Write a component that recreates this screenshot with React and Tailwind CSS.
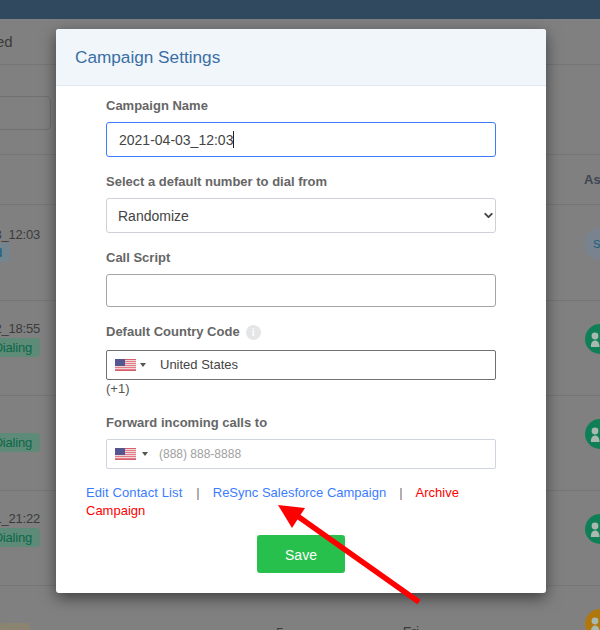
import React from "react";
import { ChevronDown } from "lucide-react";

const Flag = () => (
  <svg width="21" height="12" viewBox="0 0 21 12" className="block shrink-0">
    <rect width="21" height="12" fill="#f2d5d8" />
    <rect y="0" width="21" height="1" fill="#d8606c" />
    <rect y="2" width="21" height="1" fill="#e07d87" />
    <rect y="4" width="21" height="1" fill="#e07d87" />
    <rect y="6" width="21" height="1" fill="#e07d87" />
    <rect y="8" width="21" height="1" fill="#e07d87" />
    <rect y="10" width="21" height="1" fill="#e07d87" />
    <rect y="11" width="21" height="1" fill="#d8606c" />
    <rect width="10" height="7" fill="#55558f" />
  </svg>
);

const Caret = () => (
  <span className="block w-0 h-0 border-x-[3.5px] border-x-transparent border-t-[4px] border-t-[#555]" />
);

const Label = ({ children, className = "" }) => (
  <label className={`flex items-center h-5 text-[13px] font-bold text-[#666] ${className}`}>{children}</label>
);

const UsersGlyph = () => (
  <svg width="30" height="30" viewBox="0 0 30 30" fill="#a9b9af" className="block">
    <circle cx="10" cy="12" r="3.400" />
    <path d="M6 23c-.4-3.800 1.400-6.500 4.200-6.500 2.600 0 4.300 2.400 4.300 6.500z" />
    <circle cx="19" cy="10.500" r="4" />
    <path d="M15.500 23c0-4.500-.6-6 1-7.500 1-.6 4-.6 5 0 2 1.500 2.500 4 2.500 7.500z" />
  </svg>
);

const Avatar = ({ color = "bg-[#0f7f58]" }) => (
  <div className={`w-[30px] h-[30px] rounded-full ${color}`}>
    <UsersGlyph />
  </div>
);

const Row = ({ time, badge, badgeClass, avatar, height = "h-[95px]", top = "pt-[19px]", avatarTop = "pt-[23px]" }) => (
  <div className={`${height} shrink-0 border-b border-[#767676] flex justify-between`}>
    <div className={`w-[40px] overflow-hidden flex flex-col items-end ${top}`}>
      <span className="h-[18px] flex items-center text-[13px] tracking-[-0.2px] text-[#3b3b3b] whitespace-nowrap">{time}</span>
      <span className={`h-[19px] px-[8px] flex items-center text-[13px] tracking-[-0.2px] rounded-sm whitespace-nowrap ${badgeClass}`}>{badge}</span>
    </div>
    <div className={`w-[15px] overflow-hidden ${avatarTop}`}>{avatar}</div>
  </div>
);

export default function App() {
  return (
    <div className="relative w-[600px] h-[630px] overflow-hidden bg-[#808080] opacity-[0.999] font-['Liberation_Sans',Arial,sans-serif]">
      {/* dimmed page behind the dialog */}
      <div className="h-[19px] bg-[#31495f]" />
      <div className="h-[46px] border-b border-[#767676] flex items-center text-[15px] text-[#3b3b3b]">
        <span className="-ml-[4px] pt-[2px]">ed</span>
      </div>
      <div className="h-[90px] border-b border-[#767676] flex items-center pt-[7px]">
        <div className="w-[55px] h-[34px] -ml-[4px] border border-[#707070] rounded-[5px]" />
      </div>
      <div className="h-[50px] border-b border-[#767676] flex items-center justify-end">
        <span className="w-4 overflow-hidden whitespace-nowrap text-[13px] font-bold text-[#3f4650]">Assigned</span>
      </div>
      <Row
        height="h-[96px]"
        top="pt-[21px]"
        avatarTop="pt-[23px]"
        time="2021-04-03_12:03"
        badge="Saved"
        badgeClass="-mt-[1px] mr-[30px] bg-[#74858f] text-[#0f5f80]"
        avatar={
          <div className="w-[32px] h-[32px] -ml-[1px] rounded-full bg-[#78838f] flex items-center pl-[9px] text-[11px] text-[#0f5f80]">S</div>
        }
      />
      <Row time="2021-04-02_18:55" badge="Dialing" badgeClass="bg-[#5e8a78] text-[#0b6848]" avatar={<Avatar />} />
      <Row time="" badge="Dialing" badgeClass="bg-[#5e8a78] text-[#0b6848]" avatar={<Avatar />} />
      <Row time="2021-04-01_21:22" badge="Dialing" badgeClass="bg-[#5e8a78] text-[#0b6848]" avatar={<Avatar />} />
      <div className="h-[44px] flex">
        <div className="w-[30px] h-4 mt-[37px] bg-[#8a8470] rounded-sm" />
        <div className="ml-[246px] mt-[37px] text-sm text-[#3b3b3b]">5</div>
        <div className="ml-[119px] mt-[36px] text-sm text-[#3b3b3b]">Fri</div>
        <div className="ml-auto w-[15px] overflow-hidden pt-[23px]">
          <Avatar color="bg-[#b0780c]" />
        </div>
      </div>

      {/* dialog */}
      <div className="absolute left-[56px] top-[29px] w-[490px] h-[564px] bg-white rounded-[3px] shadow-[0_5px_15px_rgba(0,0,0,0.5)] overflow-hidden">
        <div className="h-[57px] bg-[#f1f6fb] border-b border-[#dfe7f2] flex items-center px-[19px] pt-[2px] text-[17.2px] text-[#3a6ea5]">
          Campaign Settings
        </div>
        <div className="pt-[10px]">
          <div className="ml-[50px] w-[390px]">
            <Label>Campaign Name</Label>
            <div className="mt-[6px] h-[35px] border border-[#3b7cff] rounded-[3px] flex items-center pl-[12px] text-sm text-[#444]">
              2021-04-03_12:03<span className="w-px h-[17px] bg-[#222]" />
            </div>

            <Label className="mt-[15px]">Select a default number to dial from</Label>
            <div className="relative mt-[6px]">
              <select className="block w-full h-[35px] appearance-none bg-white border border-[#cfd0d8] rounded-[3px] pl-[11px] text-sm text-[#444]">
                <option>Randomize</option>
              </select>
              <ChevronDown size={13} strokeWidth={3.5} className="absolute right-[1px] top-[11px] text-[#444]" />
            </div>

            <Label className="mt-[15px]">Call Script</Label>
            <input className="block mt-[6px] w-full h-[33px] border border-[#a5a5a5] rounded-[3px]" />

            <Label className="mt-[15px]">
              Default Country Code
              <span className="ml-[6px] w-[15px] h-[15px] rounded-full bg-[#e3e5e6] text-white text-[10px] font-bold flex items-center justify-center">i</span>
            </Label>
            <div className="mt-[8px] h-[30px] border border-[#707070] rounded-[2px] flex items-center pl-[8px] text-[13px] text-[#444]">
              <Flag />
              <span className="ml-[4px]"><Caret /></span>
              <span className="ml-[14px]">United States</span>
            </div>
            <div className="h-[18px] flex items-center text-[13px] text-[#555]">(+1)</div>

            <Label className="mt-[15px]">Forward incoming calls to</Label>
            <div className="mt-[6px] h-[30px] border border-[#d0d3e0] rounded-[2px] flex items-center pl-[8px] text-xs text-[#a0a0a0]">
              <Flag />
              <span className="ml-[6px]"><Caret /></span>
              <span className="ml-[11px]">(888) 888-8888</span>
            </div>
          </div>

          <div className="mt-[15px] ml-[30px] w-[430px] text-[13px] leading-[18px]">
            <a className="text-[#3b7cff] tracking-[0.1px]">Edit Contact List</a>
            <span className="ml-[14px] mr-[13px] text-[#777]">|</span>
            <a className="text-[#3b7cff]">ReSync Salesforce Campaign</a>
            <span className="mx-[13px] text-[#777]">|</span>
            <a className="text-[#ff0000]">Archive Campaign</a>
          </div>

          <div className="mt-[15px] flex justify-center">
            <button className="w-[88px] h-[38px] pt-[1px] bg-[#28c04c] rounded-[3px] text-white text-sm font-medium">Save</button>
          </div>
        </div>
      </div>

      {/* annotation arrow */}
      <svg className="absolute inset-0 pointer-events-none" width="600" height="630" viewBox="0 0 600 630">
        <line x1="419" y1="602" x2="296" y2="515" stroke="#ff0000" strokeWidth="5.5" />
        <polygon points="278,505 305,508 292,528" fill="#ff0000" />
      </svg>
    </div>
  );
}
